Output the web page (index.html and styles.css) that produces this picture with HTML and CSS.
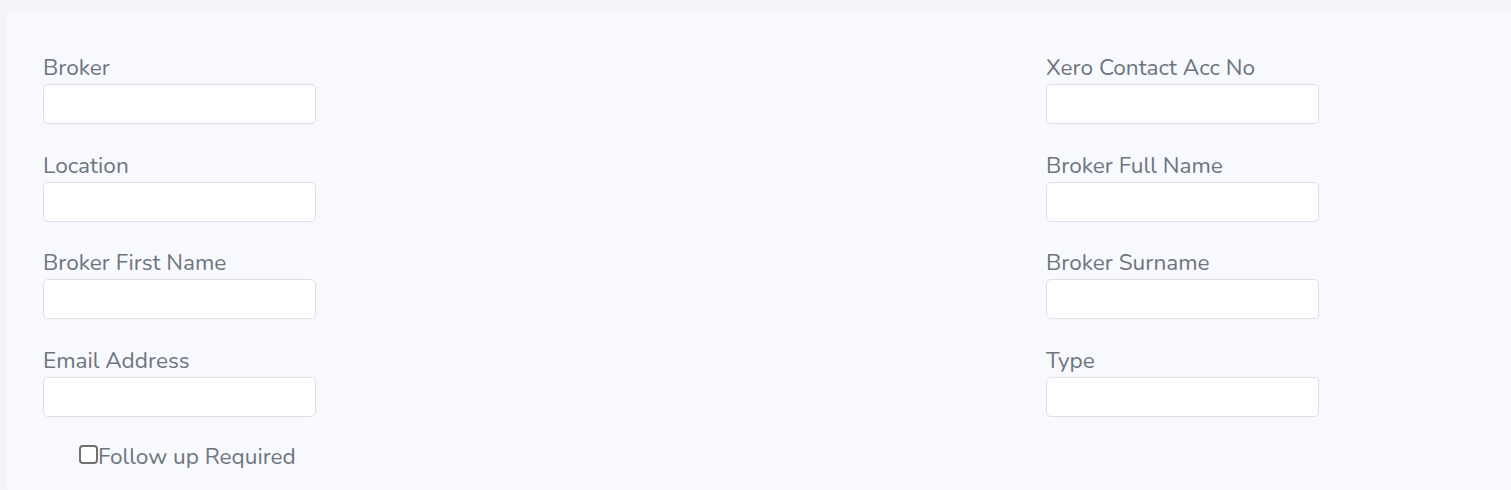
FILE: index.html
```html
<!DOCTYPE html>
<html lang="en">
<head>
    <meta charset="UTF-8">
    <meta name="viewport" content="width=device-width, initial-scale=1.0">
    <title>Broker Details</title>
    <link rel="stylesheet" href="styles.css">
</head>
<body>
    <div class="card">
        <div class="form-grid">
            <div class="field">
                <label for="broker">Broker</label>
                <input type="text" id="broker">
            </div>
            <div class="field">
                <label for="xero">Xero Contact Acc No</label>
                <input type="text" id="xero">
            </div>
            <div class="field">
                <label for="location">Location</label>
                <input type="text" id="location">
            </div>
            <div class="field">
                <label for="full-name">Broker Full Name</label>
                <input type="text" id="full-name">
            </div>
            <div class="field">
                <label for="first-name">Broker First Name</label>
                <input type="text" id="first-name">
            </div>
            <div class="field">
                <label for="surname">Broker Surname</label>
                <input type="text" id="surname">
            </div>
            <div class="field">
                <label for="email">Email Address</label>
                <input type="text" id="email">
            </div>
            <div class="field">
                <label for="type">Type</label>
                <input type="text" id="type">
            </div>
        </div>
        <div class="check-row">
            <input type="checkbox" id="follow-up">
            <label for="follow-up">Follow up Required</label>
        </div>
    </div>
</body>
</html>
```

FILE: styles.css
```css
body {
    margin: 0;
    background-color: #f3f4f8;
    font-family: "Nunito", "Open Sans", sans-serif;
    color: #6c757d;
    overflow: hidden;
}

.card {
    box-sizing: border-box;
    margin: 12px -20px 0 7px;
    padding: 42px 36px 0 36px;
    background-color: #f8f9fe;
    border-radius: 4px;
    min-height: calc(100vh - 12px);
}

.form-grid {
    display: grid;
    grid-template-columns: 273px 273px;
    column-gap: 730px;
    row-gap: 27.5px;
}

.field label {
    display: block;
    font-size: 22.6px;
    line-height: 27px;
    margin-bottom: 3px;
}

.field input {
    display: block;
    box-sizing: border-box;
    width: 273px;
    height: 40px;
    background-color: #fff;
    border: 1px solid #dde0e6;
    border-radius: 5px;
}

.check-row {
    display: flex;
    align-items: center;
    height: 31px;
    margin-top: 24.5px;
    padding-left: 36px;
    font-size: 22.6px;
}

.check-row input {
    appearance: none;
    flex-shrink: 0;
    box-sizing: border-box;
    width: 19px;
    height: 19px;
    margin: 0;
    background-color: #fff;
    border: 2px solid #707070;
    border-radius: 4px;
    position: relative;
    top: -2px;
}
```
